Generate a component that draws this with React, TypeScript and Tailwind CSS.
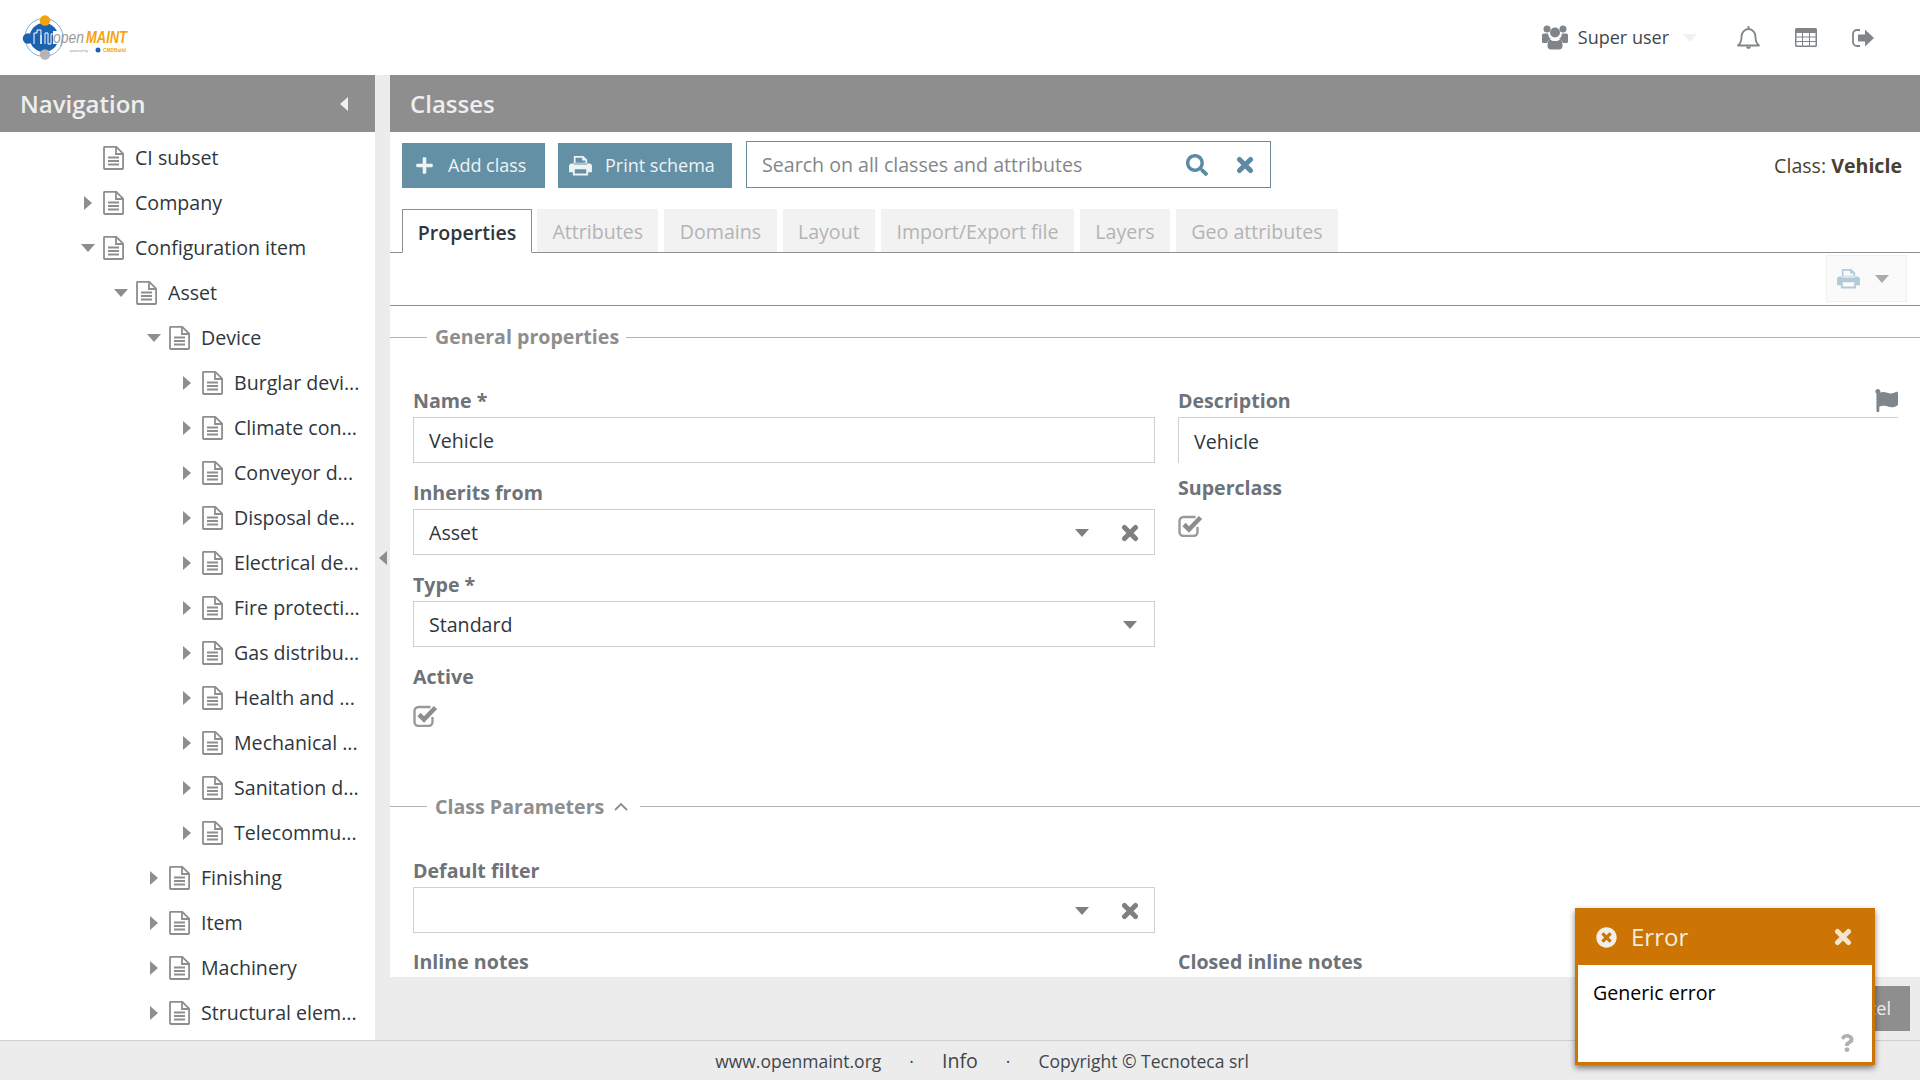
import React from "react";
import { FaPlus, FaSearch, FaFlag, FaQuestion, FaTimesCircle } from "react-icons/fa";

type TreeRow = { label: string; depth: 1 | 2 | 3 | 4; caret?: "right" | "down" };

const treeRows: TreeRow[] = [
  { label: "CI subset", depth: 1 },
  { label: "Company", depth: 1, caret: "right" },
  { label: "Configuration item", depth: 1, caret: "down" },
  { label: "Asset", depth: 2, caret: "down" },
  { label: "Device", depth: 3, caret: "down" },
  { label: "Burglar devi...", depth: 4, caret: "right" },
  { label: "Climate con...", depth: 4, caret: "right" },
  { label: "Conveyor d...", depth: 4, caret: "right" },
  { label: "Disposal de...", depth: 4, caret: "right" },
  { label: "Electrical de...", depth: 4, caret: "right" },
  { label: "Fire protecti...", depth: 4, caret: "right" },
  { label: "Gas distribu...", depth: 4, caret: "right" },
  { label: "Health and ...", depth: 4, caret: "right" },
  { label: "Mechanical ...", depth: 4, caret: "right" },
  { label: "Sanitation d...", depth: 4, caret: "right" },
  { label: "Telecommu...", depth: 4, caret: "right" },
  { label: "Finishing", depth: 3, caret: "right" },
  { label: "Item", depth: 3, caret: "right" },
  { label: "Machinery", depth: 3, caret: "right" },
  { label: "Structural elem...", depth: 3, caret: "right" },
];

const depthPadding = { 1: "pl-[79px]", 2: "pl-[112px]", 3: "pl-[145px]", 4: "pl-[178px]" };

const tabs = ["Attributes", "Domains", "Layout", "Import/Export file", "Layers", "Geo attributes"];

const FileIcon = () => (
  <svg viewBox="0 0 21 24" className="w-[21px] h-[24px]" fill="none" stroke="#8e8e8e" strokeWidth="1.8">
    <path d="M1 1.500a.7.7 0 0 1 .7-.7h11.500l6.900 6.900v14.600a.7.7 0 0 1-.7.7H1.700a.7.7 0 0 1-.7-.7z" />
    <path d="M13 1v7h7" />
    <path d="M5 11.500h11M5 15h11M5 18.500h11" />
  </svg>
);

const Caret = ({ dir }: { dir?: "right" | "down" }) => (
  <span className="w-[18px] h-[18px] flex items-center justify-center shrink-0">
    {dir === "right" && (
      <svg viewBox="0 0 8 14" className="w-[8px] h-[14px] ml-[-1px]"><path d="M0 0l8 7-8 7z" fill="#8e8e8e" /></svg>
    )}
    {dir === "down" && (
      <svg viewBox="0 0 14 8" className="w-[14px] h-[8px]"><path d="M0 0h14L7 8z" fill="#8e8e8e" /></svg>
    )}
  </span>
);

const DownCaret = ({ color = "#7f7f7f" }: { color?: string }) => (
  <svg viewBox="0 0 14 8" className="w-[14px] h-[8px]"><path d="M0 0h14L7 8z" fill={color} /></svg>
);

// chunky font-awesome 4 style cross
const XIcon = ({ color, size = "w-[18px] h-[18px]" }: { color: string; size?: string }) => (
  <svg viewBox="0 0 18 18" className={size} fill="none" stroke={color} strokeWidth="5" strokeLinecap="round">
    <path d="M3.500 3.500l11 11M14.500 3.500l-11 11" />
  </svg>
);

const PrinterIcon = ({ size }: { size: string }) => (
  <svg viewBox="0 0 24 22" className={size} fill="currentColor">
    <path fillRule="evenodd" d="M5 1h10l4 4v5H5zM6.800 2.800v5.400h10.400V5.700h-3.400V2.800zM3 9h18a3 3 0 0 1 3 3v6h-4v3.500H4V18H0v-6a3 3 0 0 1 3-3zM6 15v4.500h12V15z" />
  </svg>
);

const UsersIcon = () => (
  <svg viewBox="0 0 26 25" className="w-[26px] h-[25px]" fill="#808589">
    <circle cx="13" cy="7.500" r="5" />
    <circle cx="5" cy="4" r="3.500" />
    <circle cx="21" cy="4" r="3.500" />
    <path d="M0 9.500a3 3 0 0 1 3-1h3c.5 3 1.500 4.500 3 5.500-2 1-3.500 2.500-4 4H1.500A1.500 1.500 0 0 1 0 16.500zM26 9.500a3 3 0 0 0-3-1h-3c-.5 3-1.500 4.500-3 5.500 2 1 3.500 2.500 4 4h3.500a1.500 1.500 0 0 0 1.500-1.500z" />
    <path d="M8 14.500c1.500 1 3 1.500 5 1.500s3.500-.5 5-1.500c2 1 2.500 3 2.500 6v1a3.500 3.500 0 0 1-3.500 3H9a3.500 3.500 0 0 1-3.500-3v-1c0-3 .5-5 2.500-6z" />
  </svg>
);

const BellIcon = () => (
  <svg viewBox="0 0 23 25" className="w-[23px] h-[25px]" fill="none" stroke="#808589" strokeWidth="1.800">
    <path d="M1 20.500c2.500-2 3.500-4.500 3.500-8.500 0-4.500 3-8 7-8s7 3.500 7 8c0 4 1 6.500 3.500 8.500z" strokeLinejoin="round" />
    <path d="M11.500 1v3" />
    <path d="M9 21.500a2.500 2.500 0 0 0 5 0z" fill="#808589" stroke="none" />
  </svg>
);

const TableIcon = () => (
  <svg viewBox="0 0 22 19" className="w-[22px] h-[19px]" fill="#808589">
    <path fillRule="evenodd" d="M1.500 0h19A1.500 1.500 0 0 1 22 1.500v16a1.500 1.500 0 0 1-1.500 1.500h-19A1.500 1.500 0 0 1 0 17.500v-16A1.500 1.500 0 0 1 1.500 0zM1.500 5v3.500h5.500V5zM8 5v3.500h6V5zM15 5v3.500h5.500V5zM1.500 9.500V13h5.500V9.500zM8 9.500V13h6V9.500zM15 9.500V13h5.500V9.500zM1.500 14v3.500h5.500V14zM8 14v3.500h6V14zM15 14v3.500h5.500V14z" />
  </svg>
);

const CheckBox = () => (
  <svg viewBox="0 0 25 23" className="w-[25px] h-[23px]" fill="none">
    <path d="M19.500 13v5a4 4 0 0 1-4 4h-10a4 4 0 0 1-4-4V7a4 4 0 0 1 4-4h12" stroke="#9a9a9a" strokeWidth="2.400" />
    <path d="M6 10.500l5 5 11.500-12" stroke="#8e8e8e" strokeWidth="4.600" />
  </svg>
);

const SignOut = () => (
  <svg viewBox="0 0 22 20" className="w-[22px] h-[20px]" fill="#808589">
    <path d="M8 2H5a4 4 0 0 0-4 4v8a4 4 0 0 0 4 4h3" fill="none" stroke="#808589" strokeWidth="1.800" />
    <path d="M6 6.500h7V1.500l9 8.500-9 8.500v-5H6z" />
  </svg>
);

const Logo = () => (
  <svg viewBox="0 0 115 50" className="w-[115px] h-[50px] ml-[22px]">
    <circle cx="22" cy="24.500" r="19" fill="none" stroke="#5a9bd5" strokeWidth="0.800" />
    <circle cx="22" cy="24.500" r="14.500" fill="#1b62b0" />
    <circle cx="23" cy="7.500" r="5.200" fill="#f5a30c" />
    <circle cx="6" cy="25.500" r="5.200" fill="#1b62b0" />
    <circle cx="23" cy="41.500" r="5.200" fill="#b5b5b5" />
    <path d="M12 31V20h3v-3h4v14M19 31V22M23 31V20h3v11h3V21h3" fill="none" stroke="#fff" strokeWidth="1" />
    <rect x="31" y="18" width="6" height="13" fill="#fff" />
    <text x="31" y="29.500" fontFamily="'Liberation Sans', sans-serif" fontStyle="italic" fontSize="16.500" textLength="31" lengthAdjust="spacingAndGlyphs" fill="#9a9a9a">open</text>
    <text x="64" y="29.500" fontFamily="'Liberation Sans', sans-serif" fontStyle="italic" fontWeight="700" fontSize="16.500" textLength="41" lengthAdjust="spacingAndGlyphs" fill="#f5a30c">MAINT</text>
    <text x="48" y="39" fontFamily="'Liberation Sans', sans-serif" fontSize="3.500" fill="#9a9a9a">powered by</text>
    <circle cx="76" cy="37" r="2.500" fill="#1b62b0" />
    <text x="81" y="39" fontFamily="'Liberation Sans', sans-serif" fontWeight="700" fontSize="4.800" fill="#f5a30c">CMDBuild</text>
  </svg>
);

const Field = ({ label, children, className = "" }: { label: string; children?: React.ReactNode; className?: string }) => (
  <div className={className}>
    <div className="h-[22px] leading-[22px] font-bold text-[#6d7378] whitespace-nowrap">{label}</div>
    {children}
  </div>
);

const Select = ({ value, clearable }: { value?: string; clearable?: boolean }) => (
  <div className="h-[46px] mt-[5px] pt-[2px] border border-[#cfcfcf] flex items-center pl-[15px] text-[#2f363d]">
    <span className="flex-1">{value}</span>
    {clearable ? (
      <>
        <DownCaret />
        <span className="ml-[32px] mr-[15px]"><XIcon color="#7f7f7f" /></span>
      </>
    ) : (
      <span className="mr-[17px]">
        <DownCaret />
      </span>
    )}
  </div>
);

const Legend = ({ title, chevron, className = "" }: { title: string; chevron?: boolean; className?: string }) => (
  <div className={`h-[28px] flex items-center text-[#8e8e8e] font-bold ${className}`}>
    <span className="w-[37px] h-px bg-[#b4b4b4]" />
    <span className={`ml-[8px] flex items-center ${chevron ? "pt-[1px]" : ""}`}>
      {title}
      {chevron && (
        <svg viewBox="0 0 14 9" className="w-[14px] h-[9px] ml-[10px] mr-[5px]" fill="none" stroke="#8e8e8e" strokeWidth="1.800"><path d="M1 8l6-6 6 6" /></svg>
      )}
    </span>
    <span className="ml-[7px] flex-1 h-px bg-[#b4b4b4]" />
  </div>
);

export default function App() {
  return (
    <div className="relative w-[1920px] h-[1080px] overflow-hidden flex flex-col bg-white text-[19.6px] text-[#2f363d] font-['Open_Sans','Noto_Sans',sans-serif]">
      {/* header */}
      <header className="h-[75px] shrink-0 flex items-center">
        <Logo />
        <div className="ml-auto flex items-center">
          <UsersIcon />
          <span className="ml-[10px] text-[#3f464c] text-[18px]">Super user</span>
          <span className="ml-[14px]"><DownCaret color="#f0f0f0" /></span>
          <span className="ml-[40px]"><BellIcon /></span>
          <span className="ml-[35px]"><TableIcon /></span>
          <span className="ml-[35px] mr-[46px]"><SignOut /></span>
        </div>
      </header>

      <div className="flex-1 flex min-h-0">
        {/* sidebar */}
        <aside className="w-[375px] shrink-0 flex flex-col">
          <div className="h-[57px] bg-[#8e8e8e] flex items-center pl-[20px] pr-[27px] text-[24px] font-semibold text-[#eeeeee]">
            <span className="flex-1">Navigation</span>
            <svg viewBox="0 0 8 14" className="w-[8px] h-[14px]"><path d="M8 0L0 7l8 7z" fill="#f0f0f0" /></svg>
          </div>
          <div className="pt-[3px] flex-1 overflow-hidden">
            {treeRows.map((row) => (
              <div key={row.label} className={`h-[45px] flex items-center ${depthPadding[row.depth]}`}>
                <Caret dir={row.caret} />
                <span className="ml-[6px]"><FileIcon /></span>
                <span className="ml-[11px] whitespace-nowrap">{row.label}</span>
              </div>
            ))}
          </div>
        </aside>

        {/* splitter */}
        <div className="w-[15px] shrink-0 bg-[#ececec] flex items-center justify-center">
          <svg viewBox="0 0 8 14" className="w-[8px] h-[14px]"><path d="M8 0L0 7l8 7z" fill="#8e8e8e" /></svg>
        </div>

        {/* content */}
        <main className="flex-1 min-w-0 flex flex-col">
          <div className="h-[57px] shrink-0 bg-[#8e8e8e] flex items-center pl-[20px] text-[24px] font-semibold text-[#eeeeee]">Classes</div>

          <div className="flex-1 min-h-0 overflow-hidden">
            <div className="h-[77px] flex items-start pl-[12px] pr-[18px]">
              <button className="mt-[11px] h-[45px] w-[143px] bg-[#6490a6] text-[#eef3f6] text-[18px] flex items-center pl-[13px]">
                <FaPlus className="text-[19px]" />
                <span className="ml-[14px]">Add class</span>
              </button>
              <button className="mt-[11px] ml-[13px] h-[45px] w-[174px] bg-[#6490a6] text-[#eef3f6] text-[18px] flex items-center pl-[11px]">
                <span className="text-[#eef3f6]"><PrinterIcon size="w-[23px] h-[21px]" /></span>
                <span className="ml-[13px]">Print schema</span>
              </button>
              <div className="mt-[9px] ml-[14px] h-[47px] w-[525px] border border-[#6b8c9c] flex items-center pt-[1px] pl-[15px] pr-[16px] text-[#82878b]">
                <span className="flex-1">Search on all classes and attributes</span>
                <FaSearch className="text-[#5b8aa2] text-[22px]" />
                <span className="ml-[28px]"><XIcon color="#5b8aa2" /></span>
              </div>
              <div className="ml-auto mt-[19px] text-[#4a3f30]">
                Class: <span className="font-bold">Vehicle</span>
              </div>
            </div>

            <div className="h-[44px] border-b border-[#8e8e8e] flex items-end pl-[12px]">
              <div className="h-[44px] w-[130px] -mb-px pt-[3px] border border-[#8e8e8e] border-b-white bg-white flex items-center justify-center font-semibold text-[#2f363d]">Properties</div>
              <div className="flex ml-[5px] gap-[6px]">
                {tabs.map((tab) => (
                  <div key={tab} className="h-[43px] pt-[2px] px-[15.4px] bg-[#f2f2f2] flex items-center text-[#b4b4b4]">{tab}</div>
                ))}
              </div>
            </div>

            <div className="h-[53px] border-b border-[#8e8e8e] flex justify-end items-start pr-[13px]">
              <div className="mt-[2px] w-[81px] h-[47px] bg-[#fafafa] border border-[#f0f0f0] flex items-center pl-[10px]">
                <span className="text-[#b3cbd8]"><PrinterIcon size="w-[23px] h-[21px]" /></span>
                <span className="ml-[15px]"><DownCaret color="#ababab" /></span>
              </div>
            </div>

            <Legend title="General properties" className="mt-[17px]" />

            <div className="mt-[39px] pl-[23px] pr-[22px] grid grid-cols-[742px_720px] gap-x-[23px]">
              <div className="flex flex-col gap-[19px]">
                <Field label="Name *">
                  <div className="h-[46px] mt-[5px] pt-[2px] border border-[#cfcfcf] flex items-center pl-[15px]">Vehicle</div>
                </Field>
                <Field label="Inherits from"><Select value="Asset" clearable /></Field>
                <Field label="Type *"><Select value="Standard" /></Field>
                <Field label="Active">
                  <div className="mt-[16px]"><CheckBox /></div>
                </Field>
              </div>
              <div>
                <div className="relative">
                  <Field label="Description">
                    <div className="h-[46px] mt-[5px] pt-[3px] border-l border-t border-[#cfcfcf] flex items-center pl-[15px]">Vehicle</div>
                  </Field>
                  <FaFlag className="absolute right-0 top-[-1px] text-[#7f868c] text-[23px]" />
                </div>
                <Field label="Superclass" className="mt-[14px]">
                  <div className="mt-[15px]"><CheckBox /></div>
                </Field>
              </div>
            </div>

            <Legend title="Class Parameters" chevron className="mt-[65px]" />

            <div className="mt-[40px] pl-[23px] pr-[22px] grid grid-cols-[742px_720px] gap-x-[23px] gap-y-[18px]">
              <Field label="Default filter"><Select clearable /></Field>
              <div />
              <Field label="Inline notes" />
              <Field label="Closed inline notes" />
            </div>
          </div>

          <div className="h-[63px] shrink-0 bg-[#ececec] flex items-start justify-end pr-[10px]">
            <button className="mt-[9px] h-[45px] w-[120px] bg-[#8e8e8e] text-[#f0f0f0] text-[18px] flex items-center justify-end pr-[19px]">Cancel</button>
          </div>
        </main>
      </div>

      <footer className="h-[40px] shrink-0 bg-[#ececec] border-t border-[#d0d0d0] flex items-center justify-center pt-[1px] pl-[44px] text-[17.5px] text-[#3f464c]">
        <span>www.openmaint.org</span>
        <span className="mx-[28px]">·</span>
        <span className="text-[19.6px]">Info</span>
        <span className="mx-[28px]">·</span>
        <span>Copyright © Tecnoteca srl</span>
      </footer>

      {/* error popup */}
      <div className="absolute left-[1575px] top-[908px] w-[300px] h-[157px] border-[3px] border-[#cc7504] bg-white flex flex-col shadow-[0_3px_6px_rgba(0,0,0,0.5)]">
        <div className="h-[54px] bg-[#cc7504] flex items-center pb-[2px] pl-[18px] pr-[20px] text-[24px] text-[#f3ebdf]">
          <FaTimesCircle className="text-[#f3efe8] text-[21px]" />
          <span className="ml-[14px] flex-1">Error</span>
          <XIcon color="#f6e4cc" />
        </div>
        <div className="flex-1 relative pl-[15px] pt-[13px] text-black">
          Generic error
          <FaQuestion className="absolute right-[16px] bottom-[10px] text-[#b0b0b0] text-[18px]" />
        </div>
      </div>
    </div>
  );
}
